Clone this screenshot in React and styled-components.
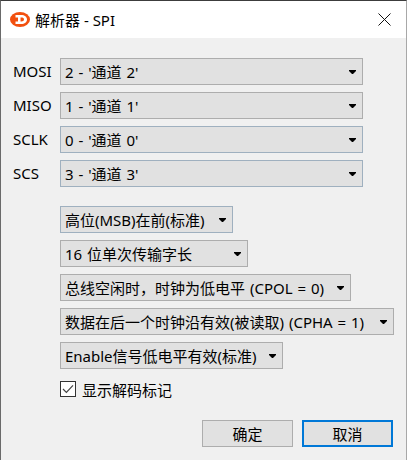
import React from "react";
import styled, { createGlobalStyle } from "styled-components";

const channels = [
  { label: "MOSI", value: "2 - '通道 2'" },
  { label: "MISO", value: "1 - '通道 1'" },
  { label: "SCLK", value: "0 - '通道 0'", tone: "#9fb0bf" },
  { label: "SCS", value: "3 - '通道 3'", tone: "#9fb0bf" },
];

const options = [
  { value: "高位(MSB)在前(标准)", width: 173, tone: "#9fb0bf" },
  { value: "16 位单次传输字长", width: 188 },
  { value: "总线空闲时，时钟为低电平 (CPOL = 0)", width: 291 },
  { value: "数据在后一个时钟沿有效(被读取) (CPHA = 1)", width: 334 },
  { value: "Enable信号低电平有效(标准)", width: 223 },
];

function Arrow() {
  return (
    <ArrowIcon viewBox="0 0 7 4" aria-hidden="true">
      <path d="M0 0H7V1L4 4H3L0 1Z" fill="#000" />
    </ArrowIcon>
  );
}

function Combo({ value, width, tone }) {
  return (
    <ComboBox type="button" $width={width} $tone={tone}>
      <span>{value}</span>
      <Arrow />
    </ComboBox>
  );
}

function App() {
  return (
    <>
      <GlobalStyle />
      <Dialog>
        <TitleBar>
          <TitleGroup>
            <svg width="20" height="15" viewBox="0 0 20 15" aria-hidden="true">
              <ellipse cx="10" cy="7.5" rx="10" ry="7.5" fill="#f2500f" />
              <path d="M5.5 3H11C14.8 3 17 4.9 17 7.5S14.8 12 11 12H5.5V9.4H8V5.6H5.5ZM10.5 5.6V9.4H11.2C13 9.4 14 8.8 14 7.5S13 5.6 11.2 5.6Z" fill="#fff" fillRule="evenodd" />
            </svg>
            <Title>解析器 - SPI</Title>
          </TitleGroup>
          <svg width="13" height="13" viewBox="0 0 13 13" aria-hidden="true">
            <path d="M.5.5L12.5 12.5M12.5.5L.5 12.5" stroke="#111" strokeWidth="1" />
          </svg>
        </TitleBar>
        <Body>
          <ChannelList>
            {channels.map((c) => (
              <ChannelRow key={c.label}>
                <ChannelLabel>{c.label}</ChannelLabel>
                <Combo value={c.value} width={303} tone={c.tone} />
              </ChannelRow>
            ))}
          </ChannelList>
          <OptionList>
            {options.map((o) => (
              <Combo key={o.value} value={o.value} width={o.width} tone={o.tone} />
            ))}
            <CheckRow>
              <CheckMark>
                <svg width="12" height="10" viewBox="0 0 12 10" aria-hidden="true">
                  <path d="M1 5L4.4 8.4L11 1.4" fill="none" stroke="#444" strokeWidth="1.2" />
                </svg>
              </CheckMark>
              显示解码标记
            </CheckRow>
          </OptionList>
          <Footer>
            <DialogButton type="button">确定</DialogButton>
            <DialogButton type="button" $primary>取消</DialogButton>
          </Footer>
        </Body>
      </Dialog>
    </>
  );
}

export default App;

const GlobalStyle = createGlobalStyle`
  html, body {
    margin: 0;
    padding: 0;
    background: #f0f0f0;
  }
  body {
    font-family: "Noto Sans", "Noto Sans CJK SC", sans-serif;
    font-size: 15px;
    color: #000;
  }
`;

const Dialog = styled.div`
  width: 407px;
  height: 460px;
  box-sizing: border-box;
  border-top: 1px solid #3c3c3c;
  border-left: 1px solid #6a6a6a;
  border-right: 1px solid #a8a8a8;
  display: flex;
  flex-direction: column;
  background: #f0f0f0;
`;

const TitleBar = styled.div`
  height: 37px;
  background: #fff;
  display: flex;
  align-items: center;
  justify-content: space-between;
  padding: 0 15px 0 9px;
  flex-shrink: 0;
`;

const TitleGroup = styled.div`
  display: flex;
  align-items: center;
  gap: 5px;
`;

const Title = styled.span`
  font-size: 15px;
  line-height: 20px;
`;

const Body = styled.div`
  flex: 1;
  display: flex;
  flex-direction: column;
  padding: 20px 13px 0 12px;
`;

const ChannelList = styled.div`
  display: flex;
  flex-direction: column;
  gap: 7px;
`;

const ChannelRow = styled.div`
  display: flex;
  align-items: center;
`;

const ChannelLabel = styled.span`
  width: 47px;
  line-height: 27px;
`;

const ComboBox = styled.button`
  width: ${(p) => p.$width}px;
  height: 27px;
  box-sizing: border-box;
  border: 1px solid ${(p) => p.$tone || "#adadad"};
  background: #e1e1e1;
  border-radius: 0;
  padding: 0 6px 0 4px;
  margin: 0;
  display: flex;
  align-items: center;
  justify-content: space-between;
  font: inherit;
  word-spacing: 1px;
  color: #000;
  white-space: nowrap;
  flex-shrink: 0;
`;

const ArrowIcon = styled.svg`
  width: 7px;
  height: 4px;
  flex-shrink: 0;
`;

const OptionList = styled.div`
  display: flex;
  flex-direction: column;
  align-items: flex-start;
  gap: 7px;
  margin: 19px 0 0 47px;
`;

const CheckRow = styled.label`
  display: flex;
  align-items: center;
  gap: 6px;
  height: 16px;
  margin-top: 5px;
`;

const CheckMark = styled.span`
  width: 16px;
  height: 16px;
  box-sizing: border-box;
  border: 1px solid #333;
  background: #fff;
  display: flex;
  align-items: center;
  justify-content: center;
`;

const Footer = styled.div`
  display: flex;
  justify-content: flex-end;
  gap: 9px;
  margin-top: 23px;
`;

const DialogButton = styled.button`
  width: 91px;
  height: 27px;
  box-sizing: border-box;
  border: ${(p) => (p.$primary ? "2px solid #0078d7" : "1px solid #adadad")};
  background: #e1e1e1;
  border-radius: 0;
  padding: 0;
  font: inherit;
  color: #000;
`;
